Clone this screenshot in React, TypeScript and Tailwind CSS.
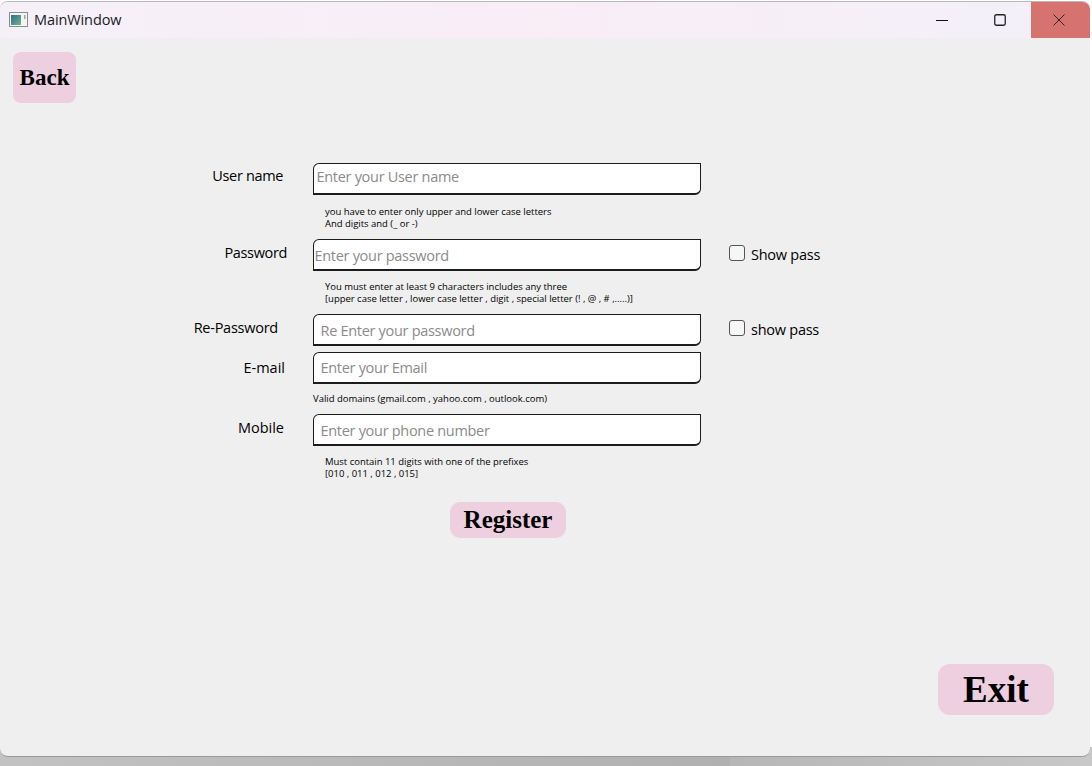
import React from "react";

const ui = "font-['Open_Sans','Noto_Sans',sans-serif]";
const serif = "font-['Liberation_Serif',serif] font-bold text-black";
const pinkBtn = "bg-[#edcfdf] flex items-center justify-center " + serif;

function Field({ label, labelCls, inputCls, placeholder, check }: { label: string; labelCls: string; inputCls: string; placeholder: string; check?: string }) {
  return (
    <div className="flex h-[33px] items-start">
      <div className={"w-[313px] text-right text-[14.5px] leading-[20px] text-black " + labelCls}>{label}</div>
      <input
        readOnly
        placeholder={placeholder}
        className={"w-[388px] h-[32px] bg-white border border-b-2 border-[#1c1c1c] rounded-tl-[6px] rounded-br-[6px] text-[14.5px] tracking-[-0.3px] outline-none placeholder:text-[#8b8b8b] " + inputCls}
      />
      {check && (
        <label className="flex items-center ml-[28px] h-[31px] text-[14.5px] tracking-[-0.25px] text-black">
          <span className="w-[16px] h-[16px] border border-[#555] rounded-[3px] bg-[#f6f6f6] mr-[6px] -mt-[3px]" />
          {check}
        </label>
      )}
    </div>
  );
}

function Hint({ lines, cls }: { lines: string[]; cls: string }) {
  return (
    <div className={"text-[9.5px] leading-[12px] tracking-[-0.02px] text-black " + cls}>
      {lines.map((l) => (
        <div key={l}>{l}</div>
      ))}
    </div>
  );
}

export default function App() {
  return (
    <div className={"w-[1092px] h-[766px] overflow-hidden pt-px bg-white " + ui}>
      <div className="relative w-[1090px] h-[756px] bg-[#efefef] rounded-[8px] overflow-hidden border-t border-b border-t-[#b8b8b8] border-b-[#999999] flex flex-col">
        <div className="h-[36px] flex items-center bg-gradient-to-r from-[#f5f0f8] via-[#f9edf6] to-[#f2f0f9]">
          <svg width="20" height="16" viewBox="0 0 20 16" className="ml-[9px] mr-[5px] shrink-0">
            <defs>
              <linearGradient id="ic" x1="0" y1="0" x2="1" y2="1">
                <stop offset="0" stopColor="#2f6f8f" />
                <stop offset="1" stopColor="#6fb48a" />
              </linearGradient>
            </defs>
            <rect x="0.5" y="0.5" width="18" height="14" fill="#f4f4f4" stroke="#8d8d8d" />
            <rect x="2" y="3" width="10" height="10" fill="url(#ic)" />
            <rect x="15" y="3" width="1.5" height="4" fill="#7fb5a8" />
          </svg>
          <span className="text-[14.5px] tracking-[-0.1px] text-[#1a1a1a]">MainWindow</span>
          <div className="ml-auto flex items-center h-full">
            <div className="w-[58px] h-full pr-[4px] flex items-center justify-center">
              <svg width="12" height="12" viewBox="0 0 12 12"><path d="M0 6.5h12" stroke="#111" /></svg>
            </div>
            <div className="w-[58px] h-full pr-[4px] flex items-center justify-center">
              <svg width="12" height="12" viewBox="0 0 12 12"><rect x="0.75" y="0.75" width="10.5" height="10.5" rx="1.5" fill="none" stroke="#222" strokeWidth="1.3" /></svg>
            </div>
            <div className="w-[59px] h-full pr-[3px] bg-[#d6736e] flex items-center justify-center">
              <svg width="12" height="12" viewBox="0 0 12 12"><path d="M0.5 0.5l11 11M11.5 0.5l-11 11" stroke="#2a2a2a" /></svg>
            </div>
          </div>
        </div>

        <div className="flex-1 flex flex-col relative">
          <button className={pinkBtn + " ml-[13px] mt-[14px] pt-[2px] w-[63px] h-[51px] rounded-[8px] text-[23px]"}>Back</button>

          <div className="mt-[60px] flex flex-col">
            <Field label="User name" labelCls="pr-[30px] pt-[3px] tracking-[-0.35px]" inputCls="pl-[2.5px] pb-[5px]" placeholder="Enter your User name" />
            <Hint cls="ml-[325px] mt-[10px] mb-[9px]" lines={["you have to enter only upper and lower case letters", "And digits and (_ or -)"]} />
            <Field label="Password" labelCls="pr-[26px] pt-[4px] tracking-[-0.35px]" inputCls="pl-[0.5px] pt-[2px]" placeholder="Enter your password" check="Show pass" />
            <Hint cls="ml-[325px] mt-[9px] mb-[9px]" lines={["You must enter at least 9 characters includes any three", "[upper case letter , lower case letter , digit , special letter (! , @ , # ,.....)]"]} />
            <Field label="Re-Password" labelCls="pr-[35px] pt-[4px] tracking-[-0.25px]" inputCls="pl-[6.5px] pt-[2px]" placeholder="Re Enter your password" check="show pass" />
            <div className="h-[5px]" />
            <Field label="E-mail" labelCls="pr-[28px] pt-[6px] tracking-[0px]" inputCls="pl-[6.5px]" placeholder="Enter your Email" />
            <Hint cls="ml-[313px] mt-[8px] mb-[9px]" lines={["Valid domains (gmail.com , yahoo.com , outlook.com)"]} />
            <Field label="Mobile" labelCls="pr-[29px] pt-[4px] tracking-[0px]" inputCls="pl-[6.5px] pt-[2px]" placeholder="Enter your phone number" />
            <Hint cls="ml-[325px] mt-[9px]" lines={["Must contain 11 digits with one of the prefixes", "[010 , 011 , 012 , 015]"]} />
            <button className={pinkBtn + " ml-[450px] mt-[22px] pb-[1px] w-[116px] h-[36px] rounded-[10px] text-[25px]"}>Register</button>
          </div>

          <button className={pinkBtn + " ml-[938px] mt-[126px] w-[116px] h-[51px] rounded-[12px] text-[37px]"}>Exit</button>
        </div>
      </div>
      <div className="flex w-[1092px] h-[19px] -mt-[10px]">
        <div className="w-[730px] bg-gradient-to-r from-[#c2c2c2] to-[#b0b0b0]" />
        <div className="flex-1 bg-gradient-to-r from-[#b6b6b6] to-[#c8c8c8]" />
      </div>
    </div>
  );
}
